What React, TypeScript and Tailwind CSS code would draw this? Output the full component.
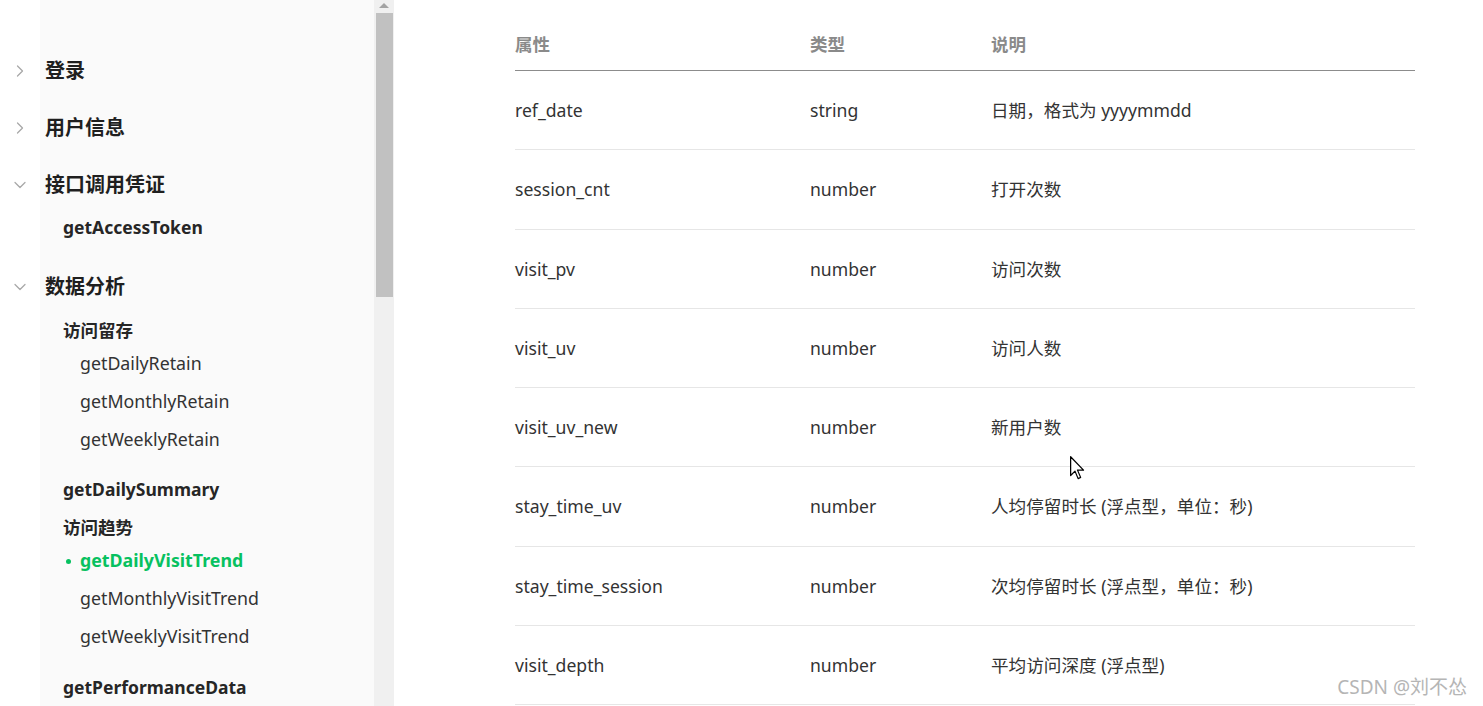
import { ChevronDown, ChevronRight } from "lucide-react";

const font = "font-['Noto_Sans','Noto_Sans_CJK_SC',sans-serif]";

type Row = { name: string; type: string; desc: string; tall?: boolean };

const rows: Row[] = [
  { name: "ref_date", type: "string", desc: "日期，格式为 yyyymmdd" },
  { name: "session_cnt", type: "number", desc: "打开次数", tall: true },
  { name: "visit_pv", type: "number", desc: "访问次数" },
  { name: "visit_uv", type: "number", desc: "访问人数" },
  { name: "visit_uv_new", type: "number", desc: "新用户数" },
  { name: "stay_time_uv", type: "number", desc: "人均停留时长 (浮点型，单位：秒)", tall: true },
  { name: "stay_time_session", type: "number", desc: "次均停留时长 (浮点型，单位：秒)" },
  { name: "visit_depth", type: "number", desc: "平均访问深度 (浮点型)" },
];

function Group({ label, open, className }: { label: string; open?: boolean; className: string }) {
  return (
    <div className={`flex h-8 items-center ${className}`}>
      <span className="flex w-[45px] shrink-0 items-center pl-[10px] text-[#a8a8a8]">
        {open ? (
          <ChevronDown size={20} strokeWidth={1.5} className="shrink-0" />
        ) : (
          <ChevronRight size={20} strokeWidth={1.5} className="shrink-0" />
        )}
      </span>
      <span className="text-[20px] font-bold text-[#1f1f1f]">{label}</span>
    </div>
  );
}

function Heading({ label, className }: { label: string; className: string }) {
  return (
    <div className={`flex h-8 items-center pl-[63px] text-[17.5px] font-bold text-[#262626] ${className}`}>
      {label}
    </div>
  );
}

function Leaf({ label, active, className }: { label: string; active?: boolean; className: string }) {
  return (
    <div className={`relative flex h-8 items-center pl-[80px] text-[17.8px] ${className}`}>
      {active ? (
        <>
          <span className="absolute left-[66px] top-[15px] h-[5px] w-[5px] rounded-full bg-[#07c160]" />
          <span className="font-bold text-[#07c160]">{label}</span>
        </>
      ) : (
        <span className="text-[#333]">{label}</span>
      )}
    </div>
  );
}

export default function App() {
  return (
    <div className={`relative flex h-[706px] w-full overflow-hidden bg-white ${font}`}>
      <aside className="flex h-full shrink-0">
        <nav className="h-full w-[374px] bg-[linear-gradient(to_right,#ffffff_40px,#fafafa_40px)] pt-[55px]">
          <Group label="登录" className="" />
          <Group label="用户信息" className="mt-[25px]" />
          <Group label="接口调用凭证" open className="mt-[25px]" />
          <Heading label="getAccessToken" className="mt-[10px]" />
          <Group label="数据分析" open className="mt-[28px]" />
          <Heading label="访问留存" className="mt-[11px]" />
          <Leaf label="getDailyRetain" className="mt-[1px]" />
          <Leaf label="getMonthlyRetain" className="mt-[6px]" />
          <Leaf label="getWeeklyRetain" className="mt-[6px]" />
          <Heading label="getDailySummary" className="mt-[18px]" />
          <Heading label="访问趋势" className="mt-[6px]" />
          <Leaf label="getDailyVisitTrend" active className="mt-[1px]" />
          <Leaf label="getMonthlyVisitTrend" className="mt-[6px]" />
          <Leaf label="getWeeklyVisitTrend" className="mt-[6px]" />
          <Heading label="getPerformanceData" className="mt-[19px]" />
        </nav>
        <div className="flex h-full w-[20px] flex-col items-center bg-[#f0f0f0]">
          <svg width="10" height="6" viewBox="0 0 10 6" className="mt-[3px]">
            <path d="M5 0 L10 5 L0 5 Z" fill="#a3a3a3" />
          </svg>
          <div className="mt-[4px] h-[284px] w-[17px] bg-[#c1c1c1]" />
        </div>
      </aside>

      <main className="flex-1 pl-[121px]">
        <div className="mt-[18px] w-[900px]">
          <div className="grid h-[53px] grid-cols-[295px_181px_1fr] items-center border-b border-[#8c8c8c] text-[17.5px] font-bold text-[#8a8a8a]">
            <span>属性</span>
            <span>类型</span>
            <span>说明</span>
          </div>
          {rows.map((r) => (
            <div
              key={r.name}
              className={`grid grid-cols-[295px_181px_1fr] items-center border-b border-[#e6e6e6] text-[17.6px] text-[#333] ${r.tall ? "h-[80px]" : "h-[79px]"}`}
            >
              <span>{r.name}</span>
              <span>{r.type}</span>
              <span>{r.desc}</span>
            </div>
          ))}
        </div>
      </main>

      <svg width="15" height="24" viewBox="0 0 12 19" className="absolute left-[1070px] top-[456px]">
        <path d="M0.5 0.5 L0.5 15.5 L4 12 L6.5 18 L8.5 17 L6 11.2 L10.8 11.2 Z" fill="#fff" stroke="#000" strokeWidth="1" strokeLinejoin="round" />
      </svg>

      <span className="absolute bottom-[5px] right-[16px] text-[19px] text-[#b5b5b5]">CSDN @刘不怂</span>
    </div>
  );
}
